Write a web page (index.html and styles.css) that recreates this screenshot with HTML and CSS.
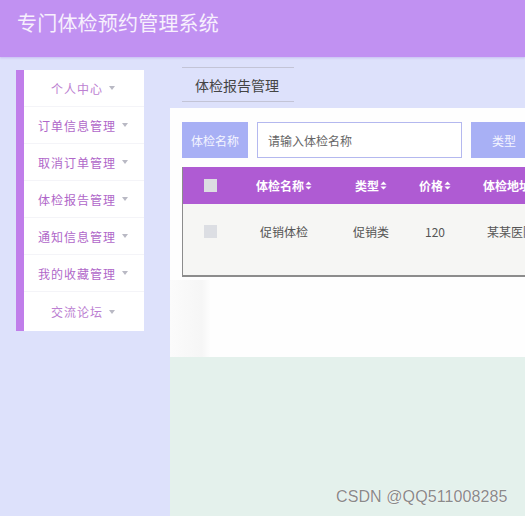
FILE: index.html
```html
<!DOCTYPE html>
<html>
<head>
<meta charset="utf-8">
<link rel="stylesheet" href="styles.css">
</head>
<body>
<div class="header"><span class="title">专门体检预约管理系统</span></div>
<div class="layout">
  <div class="sidebar">
    <ul class="menu">
      <li class="item light">个人中心<span class="caret"></span></li>
      <li class="item">订单信息管理<span class="caret"></span></li>
      <li class="item">取消订单管理<span class="caret"></span></li>
      <li class="item">体检报告管理<span class="caret"></span></li>
      <li class="item">通知信息管理<span class="caret"></span></li>
      <li class="item">我的收藏管理<span class="caret"></span></li>
      <li class="item light">交流论坛<span class="caret"></span></li>
    </ul>
  </div>
  <div class="main">
    <div class="crumb-bar"><div class="crumb">体检报告管理</div></div>
    <div class="panel">
      <div class="search">
        <div class="label">体检名称</div>
        <div class="input">请输入体检名称</div>
        <div class="label type">类型</div>
      </div>
      <div class="table">
        <div class="thead">
          <div class="c c1"><span class="box"></span></div>
          <div class="c c2">体检名称<svg class="sort" viewBox="0 0 8 10"><path d="M4 0.5L7.5 4H0.5Z M4 9.5L7.5 6H0.5Z" fill="#fff"/></svg></div>
          <div class="c c3">类型<svg class="sort" viewBox="0 0 8 10"><path d="M4 0.5L7.5 4H0.5Z M4 9.5L7.5 6H0.5Z" fill="#fff"/></svg></div>
          <div class="c c4">价格<svg class="sort" viewBox="0 0 8 10"><path d="M4 0.5L7.5 4H0.5Z M4 9.5L7.5 6H0.5Z" fill="#fff"/></svg></div>
          <div class="c c5">体检地址</div>
        </div>
        <div class="trow">
          <div class="c c1"><span class="box"></span></div>
          <div class="c c2">促销体检</div>
          <div class="c c3">促销类</div>
          <div class="c c4">120</div>
          <div class="c c5">某某医院</div>
        </div>
        <div class="tfoot"></div>
      </div>
      <div class="strip"></div>
    </div>
    <div class="green"></div>
  </div>
</div>
<div class="watermark">CSDN @QQ511008285</div>
</body>
</html>
```

FILE: styles.css
```css
* { box-sizing: border-box; }
html, body { margin: 0; padding: 0; }
body {
  width: 525px;
  height: 516px;
  overflow: hidden;
  background: #dde1fb;
  font-family: "Microsoft YaHei", "Noto Sans CJK SC", sans-serif;
  position: relative;
}
.header {
  height: 57px;
  background: #c191f2;
  display: flex;
  align-items: center;
  padding-left: 17px;
  box-shadow: 0 1px 2px rgba(150, 110, 220, 0.3);
}
.title {
  color: #f7f0fd;
  font-size: 20px;
  letter-spacing: 0.2px;
  padding-bottom: 12px;
}
.layout {
  display: flex;
  height: 459px;
}
.sidebar {
  width: 170px;
  flex: none;
  padding: 13px 0 0 16px;
}
.menu {
  list-style: none;
  margin: 0;
  padding: 0;
  width: 128px;
  border-left: 8px solid #c07eea;
  background: #fff;
}
.item {
  height: 37px;
  display: flex;
  align-items: center;
  justify-content: center;
  font-size: 12px;
  letter-spacing: 1px;
  color: #b067c9;
  border-bottom: 1px solid #f4f4f8;
  padding-right: 2px;
}
.item:last-child { border-bottom: none; height: 39px; }
.item.light { color: #bc7fd2; }
.caret {
  display: inline-block;
  width: 0;
  height: 0;
  margin-left: 6px;
  border-left: 3px solid transparent;
  border-right: 3px solid transparent;
  border-top: 4px solid #b9b9c4;
}
.main {
  flex: 1;
  display: flex;
  flex-direction: column;
  overflow: hidden;
}
.crumb-bar {
  height: 51px;
  padding: 10px 0 0 12px;
}
.crumb {
  width: 112px;
  height: 35px;
  border-top: 1px solid #c3c4d6;
  border-bottom: 1px solid #c3c4d6;
  display: flex;
  align-items: center;
  padding-left: 13px;
  font-size: 14px;
  color: #444;
}
.panel {
  height: 249px;
  background: #fefefe;
  padding: 14px 0 0 12px;
  position: relative;
  overflow: hidden;
}
.search {
  display: flex;
  height: 36px;
  width: 400px;
}
.label {
  width: 66px;
  background: #a8b0f5;
  color: #f4f5ff;
  font-size: 12px;
  display: flex;
  align-items: center;
  justify-content: center;
  flex: none;
}
.input {
  width: 205px;
  margin-left: 9px;
  border: 1px solid #b4b8ef;
  background: #fff;
  font-size: 12px;
  color: #666;
  display: flex;
  align-items: center;
  padding-left: 10px;
  flex: none;
}
.label.type { margin-left: 9px; width: 66px; }
.table {
  margin-top: 9px;
  width: 420px;
  border-left: 1px solid #8c8c8c;
  border-bottom: 2px solid #8c8c8c;
  position: relative;
  z-index: 1;
}
.thead, .trow {
  display: flex;
  align-items: center;
}
.thead {
  height: 37px;
  background: #af5bd3;
  color: #fff;
  font-weight: bold;
  font-size: 12px;
}
.trow {
  height: 55px;
  background: #f6f6f4;
  color: #555;
  font-size: 12px;
}
.tfoot {
  height: 16px;
  background: #f6f6f4;
}
.c {
  display: flex;
  align-items: center;
  justify-content: center;
  flex: none;
}
.c1 { width: 53px; padding-left: 1px; }
.c2 { width: 96px; }
.c3 { width: 78px; }
.c4 { width: 50px; }
.c5 { width: 100px; justify-content: flex-start; padding-left: 23px; }
.trow .c5 { padding-left: 27px; }
.box {
  width: 13px;
  height: 13px;
  background: #dcdde2;
}
.trow .box { background: #dcdee3; }
.sort {
  width: 7px;
  height: 9px;
  margin-left: 1px;
}
.strip {
  position: absolute;
  left: 0;
  top: 172px;
  width: 40px;
  height: 77px;
  background: linear-gradient(to right, #fbfbfb, #f6f6f6 80%, #fdfdfd);
}
.green {
  flex: 1;
  background: #e4f1ec;
}
.watermark {
  position: absolute;
  left: 336px;
  top: 488px;
  font-family: "Liberation Sans", Arial, sans-serif;
  font-size: 16px;
  color: #8a8a8a;
  text-shadow: 0 0 1px #fff, 0 0 1px #fff;
  letter-spacing: 0.1px;
}
```
